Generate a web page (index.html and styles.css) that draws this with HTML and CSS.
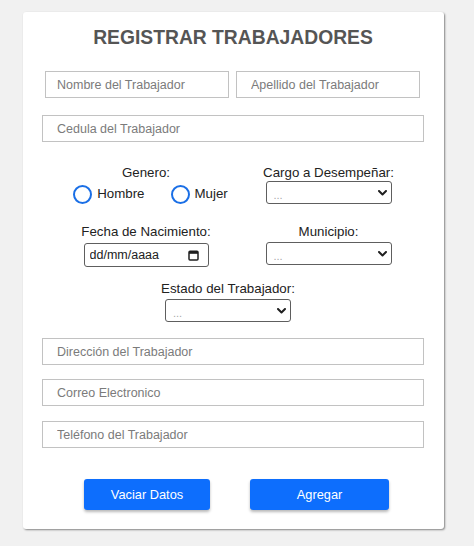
FILE: index.html
```html
<!DOCTYPE html>
<html lang="es">
<head>
<meta charset="utf-8">
<title>Registrar Trabajadores</title>
<link rel="stylesheet" href="styles.css">
</head>
<body>
<form class="card">
  <h1 class="title">REGISTRAR TRABAJADORES</h1>
  <div class="row-two">
    <input class="field" type="text" placeholder="Nombre del Trabajador">
    <input class="field" type="text" placeholder="Apellido del Trabajador">
  </div>
  <input class="field field-cedula" type="text" placeholder="Cedula del Trabajador">

  <div class="grid">
    <div class="cell cell-left">
      <div class="lbl">Genero:</div>
      <div class="radios">
        <label class="radio"><input class="radio-input" type="radio" name="genero">Hombre</label>
        <label class="radio"><input class="radio-input" type="radio" name="genero">Mujer</label>
      </div>
    </div>
    <div class="cell">
      <div class="lbl">Cargo a Desempeñar:</div>
      <div class="select">
        <select><option>...</option></select>
        <svg class="chev" width="9" height="6" viewBox="0 0 9 6"><path d="M1 1l3.5 3.5L8 1" fill="none" stroke="#1f1f1f" stroke-width="2" stroke-linecap="round" stroke-linejoin="round"/></svg>
      </div>
    </div>
    <div class="cell cell-left row-b">
      <div class="lbl">Fecha de Nacimiento:</div>
      <label class="date">
        <input class="date-text" type="text" value="dd/mm/aaaa" readonly>
        <svg class="cal" width="11" height="11" viewBox="0 0 11 11"><rect x="1" y="1.2" width="9" height="8.8" rx="1" fill="none" stroke="#1f1f1f" stroke-width="1.5"/><rect x="1" y="1.2" width="9" height="2.6" fill="#1f1f1f"/></svg>
      </label>
    </div>
    <div class="cell row-b">
      <div class="lbl">Municipio:</div>
      <div class="select select-low">
        <select><option>...</option></select>
        <svg class="chev" width="9" height="6" viewBox="0 0 9 6"><path d="M1 1l3.5 3.5L8 1" fill="none" stroke="#1f1f1f" stroke-width="2" stroke-linecap="round" stroke-linejoin="round"/></svg>
      </div>
    </div>
  </div>

  <div class="estado">
    <div class="lbl">Estado del Trabajador:</div>
    <div class="select select-estado">
      <select><option>...</option></select>
      <svg class="chev" width="9" height="6" viewBox="0 0 9 6"><path d="M1 1l3.5 3.5L8 1" fill="none" stroke="#1f1f1f" stroke-width="2" stroke-linecap="round" stroke-linejoin="round"/></svg>
    </div>
  </div>

  <input class="field field-dir" type="text" placeholder="Dirección del Trabajador">
  <input class="field field-mail" type="text" placeholder="Correo Electronico">
  <input class="field field-tel" type="text" placeholder="Teléfono del Trabajador">

  <div class="actions">
    <button class="btn btn-clear" type="reset">Vaciar Datos</button>
    <button class="btn btn-add" type="button">Agregar</button>
  </div>
</form>
</body>
</html>
```

FILE: styles.css
```css
* { box-sizing: border-box; }

html, body {
  margin: 0;
  padding: 0;
  background: #f1f1f1;
  font-family: "Liberation Sans", Arial, sans-serif;
  color: #222;
}

body { padding: 12px 0 0 23px; height: 546px; overflow: hidden; }

.card {
  width: 421px;
  height: 517px;
  background: #fff;
  border-radius: 3px;
  box-shadow: 1px 1px 2px rgba(0, 0, 0, 0.45);
  padding: 0 20px 0 19px;
  display: flex;
  flex-direction: column;
}

.title {
  margin: 15px 0 0;
  font-size: 19.3px;
  line-height: 22px;
  font-weight: bold;
  color: #555;
  text-align: center;
}

.row-two {
  margin-top: 22px;
  display: grid;
  grid-template-columns: 1fr 1fr;
  gap: 7px;
  padding: 0 4px 0 3px;
}

.field {
  display: block;
  width: 100%;
  height: 27px;
  margin: 0;
  border: 1px solid #c2c2c2;
  border-radius: 0;
  padding: 0 0 0 14px;
  font-family: "Liberation Sans", Arial, sans-serif;
  font-size: 12.5px;
  color: #333;
  background: #fff;
  outline: none;
}
.row-two .field:first-child { padding-left: 11px; }
.field::placeholder { color: #7b7b7b; }

.field-cedula { margin-top: 17px; }

.grid {
  margin-top: 23px;
  display: grid;
  grid-template-columns: 1fr 1fr;
}

.cell {
  display: flex;
  flex-direction: column;
  align-items: center;
}
.cell-left { padding-left: 17px; }
.row-b { margin-top: 20px; }

.lbl {
  font-size: 13.3px;
  line-height: 16px;
  color: #222;
  text-align: center;
}

.radios {
  margin-top: 3px;
  display: flex;
  gap: 26px;
  height: 20px;
  align-items: center;
  padding-left: 9px;
}
.radio {
  display: flex;
  align-items: center;
  gap: 5px;
  font-size: 13.3px;
  line-height: 20px;
  color: #222;
}
.radio-input {
  appearance: none;
  -webkit-appearance: none;
  margin: 0;
  width: 19px;
  height: 19px;
  border: 2.5px solid #1a6fe6;
  border-radius: 50%;
  background: #fff;
}

.select {
  position: relative;
  width: 126px;
  height: 23px;
}
.select select {
  appearance: none;
  -webkit-appearance: none;
  width: 100%;
  height: 100%;
  margin: 0;
  border: 1.5px solid #5e5e5e;
  border-radius: 3px;
  background: #fff;
  padding: 5px 0 0 7px;
  font-family: "Liberation Sans", Arial, sans-serif;
  font-size: 11px;
  color: #a8a8a8;
  outline: none;
}
.chev {
  position: absolute;
  right: 5px;
  top: 9px;
  pointer-events: none;
}
.select-low { margin-top: 2px; }

.date {
  margin-top: 3px;
  width: 125px;
  height: 24px;
  border: 1.5px solid #5e5e5e;
  border-radius: 3px;
  display: flex;
  align-items: center;
  padding: 0 9px 0 5px;
}
.date-text {
  flex: 1;
  min-width: 0;
  border: 0;
  padding: 0;
  margin: 0;
  font-family: "Liberation Sans", Arial, sans-serif;
  font-size: 12.5px;
  color: #222;
  outline: none;
  background: transparent;
}
.cal { flex: none; }

.estado {
  margin-top: 14px;
  display: flex;
  flex-direction: column;
  align-items: center;
  padding-right: 10px;
}
.select-estado { margin-top: 2px; }

.field-dir { margin-top: 16px; }
.field-mail { margin-top: 14px; }
.field-tel { margin-top: 15px; }

.actions {
  margin-top: 31px;
  display: flex;
  justify-content: center;
  gap: 40px;
  padding-left: 7px;
}
.btn {
  height: 31px;
  border: 0;
  border-radius: 3px;
  background: #0d6efd;
  color: #fff;
  font-family: "Liberation Sans", Arial, sans-serif;
  font-size: 12.8px;
  box-shadow: 0 2px 3px rgba(0, 0, 0, 0.28);
  cursor: pointer;
}
.btn-clear { width: 126px; }
.btn-add { width: 139px; }
```
